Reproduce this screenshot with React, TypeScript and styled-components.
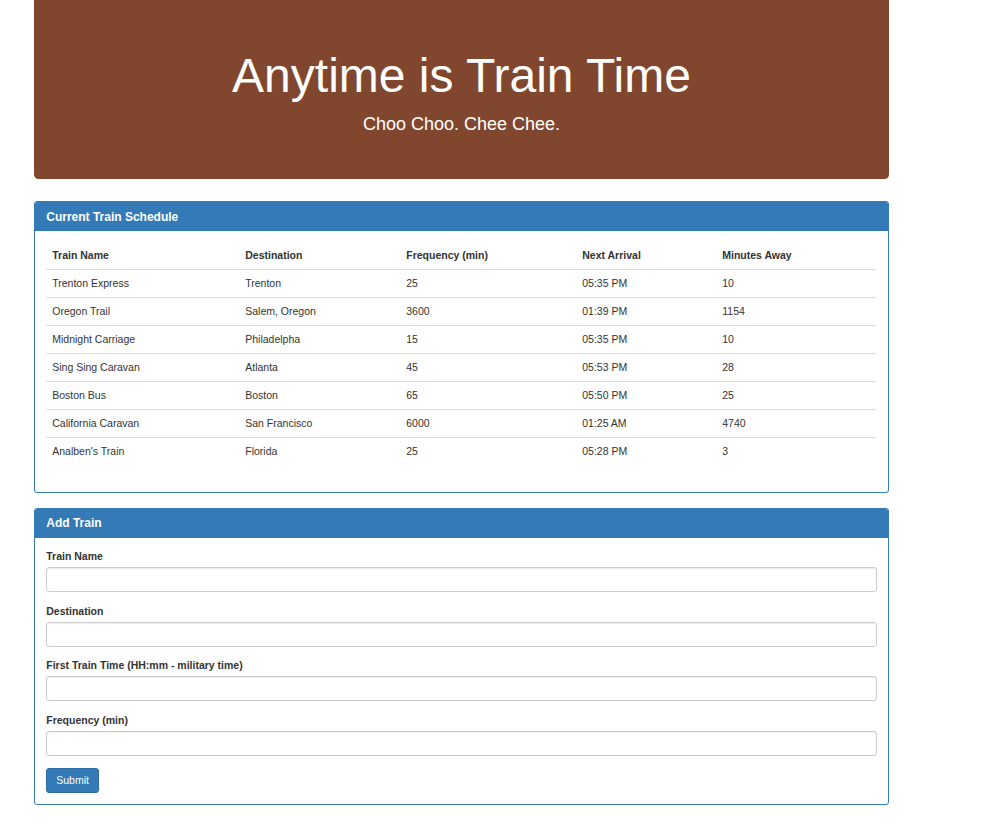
import styled, { createGlobalStyle } from 'styled-components';

const GlobalStyle = createGlobalStyle`
    html, body {
        margin: 0;
        padding: 0;
        background: #ffffff;
    }
    body {
        font-family: "Liberation Sans", Arial, Helvetica, sans-serif;
        font-size: 10.5px;
        line-height: 15px;
        color: #333333;
    }
    * {
        box-sizing: border-box;
    }
`;

const Page = styled.div`
    width: 855px;
    margin-left: 34px;
`;

const Jumbotron = styled.header`
    background: #80472e;
    color: #ffffff;
    text-align: center;
    border-radius: 0 0 4.5px 4.5px;
    padding: 35px 45px;
    height: 179px;
    margin-bottom: 22px;
`;

const Title = styled.h1`
    font-size: 48px;
    font-weight: 500;
    line-height: 52px;
    margin: 15px 0 10px;
`;

const Tagline = styled.p`
    font-size: 18px;
    line-height: 25px;
    margin: 0;
`;

const Panel = styled.section`
    border: 1px solid #337ab7;
    border-radius: 3px;
    margin-bottom: 15px;
    background: #ffffff;
    overflow: hidden;
`;

const PanelHeading = styled.div`
    background: #337ab7;
    color: #ffffff;
    padding: 7.5px 11.25px;
    height: 29px;
`;

const PanelTitle = styled.h3`
    margin: 0;
    font-size: 12px;
    line-height: 14px;
    font-weight: bold;
`;

const PanelBody = styled.div`
    padding: 11.25px;
`;

const Table = styled.table`
    width: 830px;
    border-collapse: collapse;
    border-spacing: 0;
    table-layout: fixed;
    margin-bottom: 15px;
`;

const HeadCell = styled.th<{ $w: number }>`
    width: ${(p) => p.$w}px;
    text-align: left;
    font-weight: bold;
    padding: 6px;
    line-height: 15px;
    border-bottom: 1.5px solid #dddddd;
`;

const Cell = styled.td`
    padding: 6px;
    line-height: 15px;
    border-top: 1px solid #dddddd;
`;

const FormGroup = styled.div`
    margin-bottom: 11.75px;
`;

const Label = styled.label`
    display: block;
    font-weight: bold;
    margin-bottom: 3px;
`;

const Input = styled.input`
    display: block;
    width: 100%;
    height: 25px;
    padding: 4.5px 9px;
    font: inherit;
    color: #555555;
    background: #ffffff;
    border: 1px solid #cccccc;
    border-radius: 3px;
    box-shadow: inset 0 1px 1px rgba(0, 0, 0, 0.075);
    outline: none;
`;

const SubmitButton = styled.button`
    display: block;
    height: 25px;
    padding: 4px 9px;
    font: inherit;
    color: #ffffff;
    background: #337ab7;
    border: 1px solid #2e6da4;
    border-radius: 3px;
    cursor: pointer;
`;

const columns = [
    { title: 'Train Name', width: 193 },
    { title: 'Destination', width: 161 },
    { title: 'Frequency (min)', width: 176 },
    { title: 'Next Arrival', width: 140 },
    { title: 'Minutes Away', width: 160 },
];

const trains = [
    ['Trenton Express', 'Trenton', '25', '05:35 PM', '10'],
    ['Oregon Trail', 'Salem, Oregon', '3600', '01:39 PM', '1154'],
    ['Midnight Carriage', 'Philadelpha', '15', '05:35 PM', '10'],
    ['Sing Sing Caravan', 'Atlanta', '45', '05:53 PM', '28'],
    ['Boston Bus', 'Boston', '65', '05:50 PM', '25'],
    ['California Caravan', 'San Francisco', '6000', '01:25 AM', '4740'],
    ["Analben's Train", 'Florida', '25', '05:28 PM', '3'],
];

const fields = [
    { id: 'train-name', label: 'Train Name' },
    { id: 'destination', label: 'Destination' },
    { id: 'first-train', label: 'First Train Time (HH:mm - military time)' },
    { id: 'frequency', label: 'Frequency (min)' },
];

export default function App() {
    return (
        <>
            <GlobalStyle />
            <Page>
                <Jumbotron>
                    <Title>Anytime is Train Time</Title>
                    <Tagline>Choo Choo. Chee Chee.</Tagline>
                </Jumbotron>

                <Panel>
                    <PanelHeading>
                        <PanelTitle>Current Train Schedule</PanelTitle>
                    </PanelHeading>
                    <PanelBody>
                        <Table>
                            <thead>
                                <tr>
                                    {columns.map((c) => (
                                        <HeadCell key={c.title} $w={c.width}>{c.title}</HeadCell>
                                    ))}
                                </tr>
                            </thead>
                            <tbody>
                                {trains.map((row) => (
                                    <tr key={row[0]}>
                                        {row.map((value, i) => (
                                            <Cell key={i}>{value}</Cell>
                                        ))}
                                    </tr>
                                ))}
                            </tbody>
                        </Table>
                    </PanelBody>
                </Panel>

                <Panel>
                    <PanelHeading>
                        <PanelTitle>Add Train</PanelTitle>
                    </PanelHeading>
                    <PanelBody>
                        <form onSubmit={(e) => e.preventDefault()}>
                            {fields.map((f) => (
                                <FormGroup key={f.id}>
                                    <Label htmlFor={f.id}>{f.label}</Label>
                                    <Input id={f.id} type="text" />
                                </FormGroup>
                            ))}
                            <SubmitButton type="submit">Submit</SubmitButton>
                        </form>
                    </PanelBody>
                </Panel>
            </Page>
        </>
    );
}
